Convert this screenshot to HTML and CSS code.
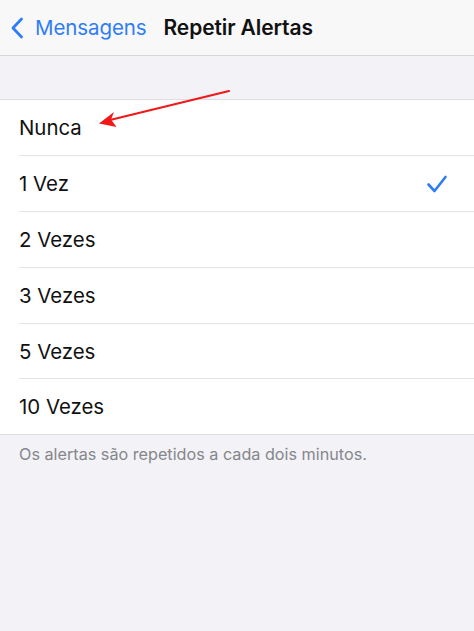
FILE: index.html
```html
<!DOCTYPE html>
<html lang="pt">
<head>
<meta charset="utf-8">
<title>Repetir Alertas</title>
<link rel="stylesheet" href="styles.css">
</head>
<body>
<div class="screen">
  <header class="nav">
    <div class="back">
      <svg class="chev" width="14" height="22" viewBox="0 0 14 22"><path d="M11.5 2 L3 11 L11.5 20" fill="none" stroke="#2f7df6" stroke-width="2.8" stroke-linecap="round" stroke-linejoin="round"/></svg>
      <span class="back-label">Mensagens</span>
    </div>
    <div class="title">Repetir Alertas</div>
  </header>
  <div class="gap"></div>
  <ul class="list">
    <li class="row"><span>Nunca</span></li>
    <li class="row"><span>1 Vez</span>
      <svg class="check" width="22" height="20" viewBox="0 0 22 20"><path d="M2.5 10.5 L8.5 17 L19.5 3" fill="none" stroke="#2f7df6" stroke-width="2.6" stroke-linecap="round" stroke-linejoin="round"/></svg>
    </li>
    <li class="row"><span>2 Vezes</span></li>
    <li class="row"><span>3 Vezes</span></li>
    <li class="row"><span>5 Vezes</span></li>
    <li class="row"><span>10 Vezes</span></li>
  </ul>
  <p class="footer">Os alertas são repetidos a cada dois minutos.</p>
  <svg class="arrow" width="474" height="140" viewBox="0 0 474 140">
    <line x1="229" y1="91" x2="110" y2="120" stroke="#f01818" stroke-width="2.2" stroke-linecap="round"/>
    <path d="M99 123.5 L114 112 L111 119.5 L116.5 127 Z" fill="#f01818"/>
  </svg>
</div>
</body>
</html>
```
FILE: styles.css
```css
html, body {
  margin: 0;
  padding: 0;
}
body {
  background: #f2f2f7;
  font-family: Inter, "Noto Sans", "Liberation Sans", sans-serif;
  -webkit-font-smoothing: antialiased;
}
.screen {
  position: relative;
  width: 474px;
  height: 631px;
  overflow: hidden;
  display: flex;
  flex-direction: column;
}
.nav {
  height: 55px;
  background: #f8f8f9;
  border-bottom: 1px solid #d6d6da;
  display: flex;
  align-items: center;
  gap: 17px;
  padding-left: 10px;
}
.back {
  display: flex;
  align-items: center;
  gap: 11px;
  color: #2f7df6;
}
.chev { display: block; }
.back-label {
  font-size: 20.5px;
  letter-spacing: -0.1px;
}
.title {
  font-size: 21px;
  font-weight: 600;
  color: #111;
  letter-spacing: -0.1px;
}
.gap {
  height: 43px;
}
.list {
  list-style: none;
  margin: 0;
  padding: 0 0 0 19px;
  background: #fff;
  border-top: 1px solid #dedee2;
  border-bottom: 1px solid #dedee2;
}
.row {
  height: 55px;
  display: flex;
  align-items: center;
  justify-content: space-between;
  padding-right: 26px;
  font-size: 20.4px;
  color: #111;
  border-bottom: 1px solid #e3e3e6;
}
.row:nth-child(5) {
  height: 54px;
}
.row:last-child {
  border-bottom: none;
}
.check { display: block; }
.footer {
  margin: 9px 0 0;
  padding-left: 19px;
  font-size: 16.2px;
  color: #86868b;
  line-height: 20px;
}
.arrow {
  position: absolute;
  left: 0;
  top: 0;
  pointer-events: none;
}
```
